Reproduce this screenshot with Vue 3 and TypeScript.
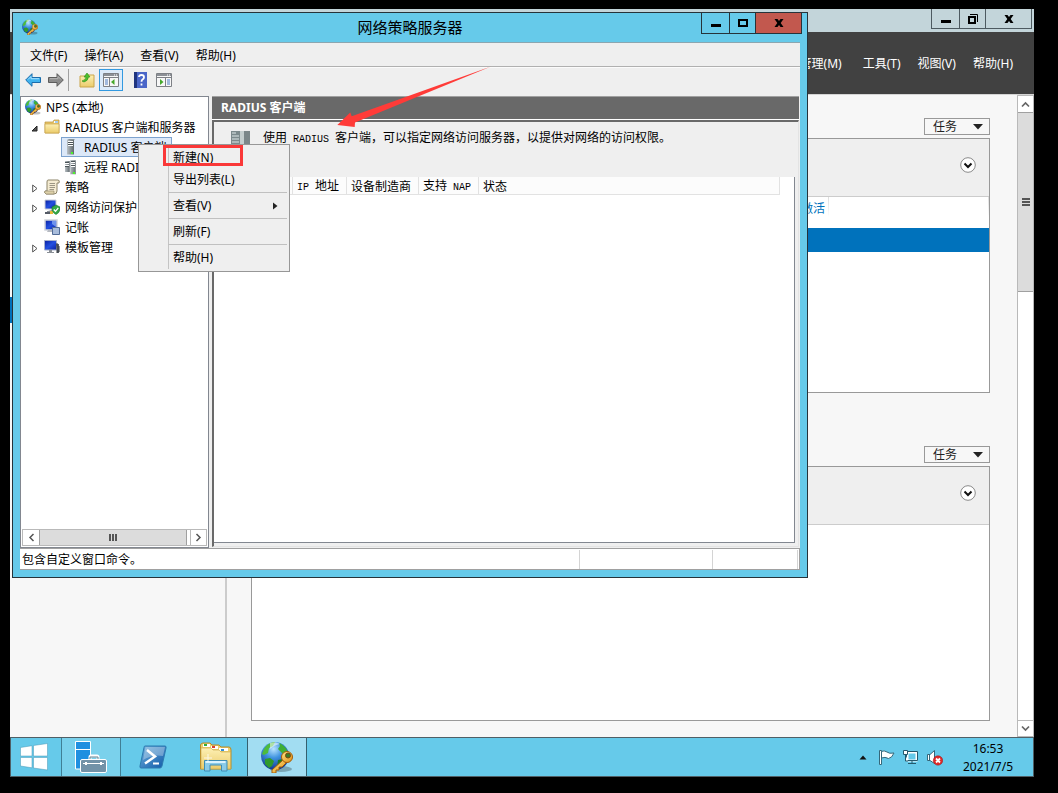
<script setup lang="ts">
import { ref } from 'vue'

interface TreeNode {
  label: string
  icon: string
  level: number
  state: 'open' | 'closed' | 'none'
}

const tree: TreeNode[] = [
  { label: 'NPS (本地)', icon: 'globe', level: 0, state: 'none' },
  { label: 'RADIUS 客户端和服务器', icon: 'folder', level: 1, state: 'open' },
  { label: 'RADIUS 客户端', icon: 'server', level: 2, state: 'none' },
  { label: '远程 RADIUS', icon: 'servers', level: 2, state: 'none' },
  { label: '策略', icon: 'scroll', level: 1, state: 'closed' },
  { label: '网络访问保护', icon: 'shield-pc', level: 1, state: 'closed' },
  { label: '记帐', icon: 'account-pc', level: 1, state: 'none' },
  { label: '模板管理', icon: 'template-pc', level: 1, state: 'closed' },
]

const selected = ref(2)
const appMenus = ['文件(F)', '操作(A)', '查看(V)', '帮助(H)']
const managerMenus = ['管理(M)', '工具(T)', '视图(V)', '帮助(H)']
const contextGroups = [['新建(N)', '导出列表(L)'], ['查看(V)'], ['刷新(F)'], ['帮助(H)']]
</script>

<template>
  <div class="screen">
    <svg class="symbols" aria-hidden="true">
      <defs>
        <radialGradient id="sea" cx="0.45" cy="0.25" r="0.8">
          <stop offset="0" stop-color="#b9e4ff" />
          <stop offset="0.4" stop-color="#3f93e0" />
          <stop offset="1" stop-color="#0b2a80" />
        </radialGradient>
        <linearGradient id="gold" x1="0" y1="0" x2="1" y2="1">
          <stop offset="0" stop-color="#ffe98a" />
          <stop offset="1" stop-color="#e08a10" />
        </linearGradient>
        <linearGradient id="paper" x1="0" y1="0" x2="0" y2="1">
          <stop offset="0" stop-color="#fdf0b4" />
          <stop offset="1" stop-color="#ebcb6a" />
        </linearGradient>
        <linearGradient id="steel" x1="0" y1="0" x2="1" y2="0">
          <stop offset="0" stop-color="#b9c0c4" />
          <stop offset="1" stop-color="#5d666b" />
        </linearGradient>
        <linearGradient id="screen-blue" x1="0" y1="0" x2="1" y2="1">
          <stop offset="0" stop-color="#0a1f9e" />
          <stop offset="0.5" stop-color="#2350e0" />
          <stop offset="1" stop-color="#0a1f9e" />
        </linearGradient>
        <linearGradient id="shell" x1="0" y1="0" x2="1" y2="1">
          <stop offset="0" stop-color="#6fb0dd" />
          <stop offset="1" stop-color="#0f58a8" />
        </linearGradient>
        <symbol id="globe" viewBox="0 0 32 32">
          <ellipse cx="20" cy="28" rx="11" ry="3" fill="#000" opacity="0.25" />
          <circle cx="14" cy="15" r="14" fill="url(#sea)" />
          <path d="M3 8C6 3 10 1 14 1L12 5L8 7L7 12L3 14L1 13Z" fill="#4dbb3c" />
          <path d="M18 2C23 4 26 8 27 12L23 14L20 11L17 8L19 5Z" fill="#3fae35" />
          <path d="M4 18L9 17L13 20L11 25L8 27L4 23Z" fill="#2f9a2c" />
          <path d="M17 19L22 18L20 25L16 27Z" fill="#1c7c25" />
          <path d="M9 2Q14 0 19 3Q13 4 9 8Z" fill="#fff" opacity="0.55" />
          <path d="M22 19L11 29L11 32H15V29H18V26H21L25 22Z" fill="url(#gold)" stroke="#a65c08" />
          <circle cx="26" cy="16" r="5.500" fill="url(#gold)" stroke="#a65c08" />
          <circle cx="27" cy="14.500" r="2.500" fill="#3d7a2a" stroke="#7a4a10" />
        </symbol>
        <symbol id="folder" viewBox="0 0 16 16">
          <path d="M1 3H9L10 1H15V14H1Z" fill="#eac66a" stroke="#b8933c" stroke-width="0.700" />
          <path d="M10 2H14V4H10Z" fill="#fff" />
          <path d="M11 2.500H14V3.500H11Z" fill="#4a9bd8" />
          <path d="M1 5H15V14H1Z" fill="url(#paper)" stroke="#c9a44a" stroke-width="0.700" />
        </symbol>
        <symbol id="server" viewBox="0 0 16 16">
          <path d="M3 1L5 0H11L10 1V15H3Z" fill="#8a9499" />
          <path d="M3 1H10V15.500H3Z" fill="url(#steel)" />
          <path d="M4 2.500H9M4 4.500H9M4 6.500H9" stroke="#fff" />
          <path d="M4 3.500H9M4 5.500H9" stroke="#4a5357" />
          <rect x="7" y="13" width="2" height="2" fill="#4cf52c" />
        </symbol>
        <symbol id="servers" viewBox="0 0 16 16">
          <path d="M1 2H6V13H1Z" fill="url(#steel)" />
          <path d="M6 1H12V15.500H6Z" fill="url(#steel)" stroke="#fff" stroke-width="0.500" />
          <path d="M1 4.500H5M1 6.500H5M7 3.500H11M7 5.500H11M7 7.500H11" stroke="#fff" />
          <path d="M1 3.500H5M1 7.500H5M7 2.500H11M7 6.500H11" stroke="#4a5357" />
          <rect x="9" y="13" width="2" height="2" fill="#4cf52c" />
        </symbol>
        <symbol id="scroll" viewBox="0 0 16 16">
          <path d="M4 1H14Q16 1 15 4H13V12Q13 15 10 15H2Q0 14 1 12H3V3Q3 1 4 1Z" fill="#f5ecd2" stroke="#8d8468" />
          <path d="M5.500 4.500H11M5.500 6.500H11M5.500 8.500H11M5.500 10.500H10" stroke="#9c9684" />
          <path d="M1 12H10V15H2Q0 14 1 12Z" fill="#ddd0a8" stroke="#8d8468" stroke-width="0.600" />
        </symbol>
        <symbol id="shield-pc" viewBox="0 0 16 16">
          <path d="M1 1H12V10H1Z" fill="url(#screen-blue)" stroke="#c9cdd6" />
          <path d="M4 11H9V12H3V14H8V12" fill="#8a8f96" />
          <path d="M1 13H7V15H1Z" fill="#555b66" />
          <rect x="6" y="12" width="3" height="3" fill="#e8b93a" />
          <path d="M8 8L12 6L16 8V11Q15 14 12 15.500Q9 14 8 11Z" fill="#35a947" stroke="#187a2c" stroke-width="0.600" />
          <path d="M9.800 10.500L11.500 12.300L14.300 8.800" fill="none" stroke="#fff" stroke-width="1.300" />
        </symbol>
        <symbol id="account-pc" viewBox="0 0 16 16">
          <path d="M1 1H13V11H1Z" fill="url(#screen-blue)" stroke="#cfd3dc" stroke-width="1.500" />
          <path d="M8 2H12V8L8 5Z" fill="#8fb1f5" opacity="0.7" />
          <path d="M4 11H8V13H3Z" fill="#b6bac2" />
          <path d="M8.500 8.500H15.500V15.500H8.500Z" fill="#a9bddc" stroke="#526c97" />
        </symbol>
        <symbol id="template-pc" viewBox="0 0 16 16">
          <path d="M0.500 1.500H12.500V11H0.500Z" fill="url(#screen-blue)" stroke="#a8b2cc" />
          <path d="M5 11H8V13H10V14H3V13H5Z" fill="#8a8f96" />
          <path d="M12 5H15V14H13V10Z" fill="#5a6068" />
          <path d="M13 4V14M15 7V13" stroke="#31363d" />
        </symbol>
      </defs>
    </svg>

    <div class="desktop">
      <section class="manager" aria-label="Server Manager">
        <div class="manager-title">
          <div class="controls">
            <button class="ctl" aria-label="最小化">
              <svg width="12" height="12" viewBox="0 0 12 12"><rect x="1" y="7" width="10" height="3" /></svg>
            </button>
            <button class="ctl mid" aria-label="还原">
              <svg width="12" height="12" viewBox="0 0 12 12">
                <path d="M3 1.500H10.500V9" fill="none" stroke="#000" />
                <rect x="2" y="4" width="6" height="6" fill="none" stroke="#000" stroke-width="2" />
              </svg>
            </button>
            <button class="ctl wide" aria-label="关闭">
              <svg width="12" height="12" viewBox="0 0 12 12">
                <path d="M1.500 2H4.500L6 4L7.500 2H10.500L7.700 6L10.500 10H7.500L6 8L4.500 10H1.500L4.300 6Z" />
              </svg>
            </button>
          </div>
        </div>
        <nav class="manager-menu">
          <button v-for="m in managerMenus" :key="m">{{ m }}</button>
        </nav>
        <div class="manager-body">
          <aside class="sidebar"><div class="side-selected"></div></aside>
          <main class="tiles">
            <section v-for="n in 2" :key="n" class="tile">
              <button class="task">
                <span>任务</span>
                <svg width="10" height="6" viewBox="0 0 10 6"><path d="M0 0H10L5 5.500Z" fill="#222" /></svg>
              </button>
              <div class="panel">
                <div class="panel-head">
                  <button class="round" aria-label="展开">
                    <svg width="16" height="16" viewBox="0 0 16 16">
                      <circle cx="8" cy="8" r="7.300" fill="#fff" stroke="#8a8a8a" />
                      <path d="M4.500 6.500L8 10L11.500 6.500" fill="none" stroke="#111" stroke-width="2" />
                    </svg>
                  </button>
                </div>
                <table v-if="n === 1" class="grid">
                  <thead>
                    <tr><th>激活</th><th class="rest"></th></tr>
                  </thead>
                  <tbody>
                    <tr><td></td><td></td></tr>
                  </tbody>
                </table>
              </div>
            </section>
          </main>
          <div class="vscroll">
            <button aria-label="向上">
              <svg width="9" height="7" viewBox="0 0 9 7"><path d="M1 5.500L4.500 2L8 5.500" fill="none" stroke="#666" stroke-width="1.700" /></svg>
            </button>
            <div class="vthumb"><i></i><i></i><i></i></div>
            <div class="vtrack"></div>
            <button aria-label="向下">
              <svg width="9" height="7" viewBox="0 0 9 7"><path d="M1 1.500L4.500 5L8 1.500" fill="none" stroke="#666" stroke-width="1.700" /></svg>
            </button>
          </div>
        </div>
      </section>

      <section class="nps" aria-label="网络策略服务器">
        <header class="nps-title">
          <svg class="app-icon" width="16" height="16"><use href="#globe" /></svg>
          <h1>网络策略服务器</h1>
          <div class="controls nps-controls">
            <button class="ctl" aria-label="最小化">
              <svg width="12" height="12" viewBox="0 0 12 12"><rect x="1" y="7" width="10" height="3" /></svg>
            </button>
            <button class="ctl mid" aria-label="最大化">
              <svg width="12" height="12" viewBox="0 0 12 12"><rect x="2" y="3" width="8" height="6" fill="none" stroke="#000" stroke-width="2" /></svg>
            </button>
            <button class="ctl wide close" aria-label="关闭">
              <svg width="12" height="12" viewBox="0 0 12 12">
                <path d="M1.500 2H4.500L6 4L7.500 2H10.500L7.700 6L10.500 10H7.500L6 8L4.500 10H1.500L4.300 6Z" />
              </svg>
            </button>
          </div>
        </header>

        <div class="client">
          <nav class="menubar">
            <button v-for="m in appMenus" :key="m">{{ m }}</button>
          </nav>

          <div class="toolbar">
            <button aria-label="后退">
              <svg width="16" height="16" viewBox="0 0 16 16">
                <path d="M0.700 8L7 1.700V5.500H15.500V10.500H7V14.300Z" fill="#3fb2ee" stroke="#1b6cab" />
                <path d="M3 7.500L6 4.500V6.700H14" fill="none" stroke="#a5e0ff" />
              </svg>
            </button>
            <button aria-label="前进">
              <svg width="16" height="16" viewBox="0 0 16 16">
                <path d="M15.300 8L9 1.700V5.500H0.500V10.500H9V14.300Z" fill="#8b8b8b" stroke="#5c5c5c" />
                <path d="M2 6.700H10V4.500L13 7.500" fill="none" stroke="#b5b5b5" />
              </svg>
            </button>
            <span class="bar-line"></span>
            <button class="up" aria-label="上移">
              <svg width="16" height="16" viewBox="0 0 16 16">
                <path d="M1 4H8L9 3H15V15H1Z" fill="url(#paper)" stroke="#c9a44a" />
                <path d="M3 9Q7 8 7 5L5 5L8 1L11 5H9.500Q9 9 5 10Z" fill="#4cc02c" stroke="#2a8a18" stroke-width="0.600" />
              </svg>
            </button>
            <button class="pressed" aria-label="显示/隐藏控制台树">
              <svg width="16" height="14" viewBox="0 0 16 14">
                <path d="M0.500 0.500H15.500V13.500H0.500Z" fill="#f7f7f7" stroke="#7d8085" />
                <path d="M1 2H15" stroke="#8c9096" stroke-width="2" />
                <path d="M11 2H12M13 2H14" stroke="#fff" />
                <path d="M0 4.500H16M6.500 5V13" stroke="#7d8085" />
                <path d="M2 7H5M2 9H5M2 11H5" stroke="#4c7cc4" />
                <path d="M11.500 6V12L8 9Z" fill="#45a82c" />
              </svg>
            </button>
            <button class="help" aria-label="帮助">
              <svg width="13" height="16" viewBox="0 0 13 16">
                <path d="M0 0H13V16H0Z" fill="#4a66c8" />
                <path d="M0 0H3V16H0Z" fill="#20357f" />
                <path d="M5 5Q5 3 7.500 3T10 5.200Q10 6.500 8.500 7.400Q7.500 8 7.500 9.800M7.500 11.500V13.500" fill="none" stroke="#fff" stroke-width="1.800" />
              </svg>
            </button>
            <button aria-label="显示/隐藏操作窗格">
              <svg width="16" height="14" viewBox="0 0 16 14">
                <path d="M0.500 0.500H15.500V13.500H0.500Z" fill="#f7f7f7" stroke="#7d8085" />
                <path d="M1 2H15" stroke="#8c9096" stroke-width="2" />
                <path d="M11 2H12M13 2H14" stroke="#fff" />
                <path d="M0 4.500H16M9.500 5V13" stroke="#7d8085" />
                <path d="M11 7H14M11 9H14M11 11H14" stroke="#4c7cc4" />
                <path d="M4 6V12L7.500 9Z" fill="#45a82c" />
              </svg>
            </button>
          </div>

          <div class="work">
            <div class="tree-pane">
              <ul class="tree">
                <li v-for="(node, i) in tree" :key="node.label" :class="'level-' + node.level">
                  <span class="twist">
                    <svg v-if="node.state === 'open'" width="7" height="7" viewBox="0 0 7 7"><path d="M6 1V6H1Z" fill="#555" stroke="#222" /></svg>
                    <svg v-if="node.state === 'closed'" width="6" height="9" viewBox="0 0 6 9"><path d="M0.700 1L5 4.500L0.700 8Z" fill="#fff" stroke="#555" /></svg>
                  </span>
                  <button class="node" :class="{ selected: i === selected }" @click="selected = i">
                    <svg width="16" height="16"><use :href="'#' + node.icon" /></svg>
                    <span>{{ node.label }}</span>
                  </button>
                </li>
              </ul>
              <div class="hscroll">
                <button aria-label="向左">
                  <svg width="7" height="9" viewBox="0 0 7 9"><path d="M5.500 1L2 4.500L5.500 8" fill="none" stroke="#555" stroke-width="1.500" /></svg>
                </button>
                <div class="hthumb"><i></i><i></i><i></i></div>
                <div class="htrack"></div>
                <button aria-label="向右">
                  <svg width="7" height="9" viewBox="0 0 7 9"><path d="M1.500 1L5 4.500L1.500 8" fill="none" stroke="#555" stroke-width="1.500" /></svg>
                </button>
              </div>
            </div>

            <div class="detail">
              <h2>RADIUS 客户端</h2>
              <div class="frame">
                <div class="intro">
                  <svg width="20" height="32" viewBox="0 0 20 32">
                    <path d="M0 1H9V30H0Z" fill="#7c8a8c" />
                    <path d="M1 3H5M1 6H8M1 9H8M1 12H8" stroke="#dfe8e8" />
                    <path d="M9 1H13V30H9Z" fill="#c4cece" />
                    <path d="M13 1H19V30H13Z" fill="#7b8789" />
                  </svg>
                  <p>使用<span class="latin"> RADIUS </span>客户端，可以指定网络访问服务器，以提供对网络的访问权限。</p>
                </div>
                <div class="list">
                  <table>
                    <colgroup>
                      <col class="c-name" /><col class="c-ip" /><col class="c-maker" /><col class="c-nap" /><col />
                    </colgroup>
                    <thead>
                      <tr>
                        <th></th>
                        <th><span class="latin">IP </span>地址</th>
                        <th>设备制造商</th>
                        <th>支持<span class="latin"> NAP</span></th>
                        <th>状态</th>
                      </tr>
                    </thead>
                  </table>
                </div>
              </div>
            </div>
          </div>

          <footer class="status">
            <span class="message">包含自定义窗口命令。</span>
            <span class="cell wide-cell"></span>
            <span class="cell"></span>
          </footer>
        </div>
      </section>

      <div class="context" role="menu">
        <div v-for="(group, g) in contextGroups" :key="g" class="group">
          <button v-for="item in group" :key="item" role="menuitem">
            <span>{{ item }}</span>
            <svg v-if="g === 1" width="5" height="8" viewBox="0 0 5 8"><path d="M0 0.500V7.500L4.500 4Z" fill="#222" /></svg>
          </button>
        </div>
      </div>
      <div class="highlight"></div>
      <svg class="arrow" width="165" height="70" viewBox="0 0 165 70" aria-hidden="true">
        <path d="M7.300 65L20.300 52.600L21.700 56.200L161 6.600L25 62.500L24.700 67Z" fill="#ff3b38" />
      </svg>

      <footer class="taskbar">
        <button class="app start" aria-label="开始">
          <svg width="28" height="28" viewBox="0 0 28 28" fill="#fff" stroke="#4696b4" stroke-width="0.500">
            <path d="M0.500 4.500L12 2.700V13H0.500ZM13.500 2.500L27.500 0.500V13H13.500ZM0.500 14.500H12V24.800L0.500 23ZM13.500 14.500H27.500V27L13.500 25Z" />
          </svg>
        </button>
        <button class="app server-app" aria-label="服务器管理器">
          <svg width="34" height="34" viewBox="0 0 34 34">
            <path d="M1.500 1.500H16.500V29H1.500Z" fill="#1f8fe0" stroke="#fff" />
            <path d="M2 9.500H16" stroke="#fff" />
            <path d="M16 20V17Q16 16 17 16H23Q24 16 24 17V20" fill="none" stroke="#fff" stroke-width="3" />
            <path d="M16 20V17H24V20" fill="none" stroke="#66818f" />
            <rect x="6.500" y="19.500" width="26" height="13" rx="1.500" fill="#7292a8" stroke="#fff" />
            <path d="M9 23.500H30" stroke="#fff" />
            <path d="M12 22V25M27 22V25" stroke="#fff" stroke-width="2" />
          </svg>
        </button>
        <button class="app" aria-label="PowerShell">
          <svg width="28" height="24" viewBox="0 0 28 24">
            <path d="M6 1H26Q27.500 1 27 3L23 21Q22.500 23 21 23H2Q0.500 23 1 21L5 2.500Q5 1 6 1Z" fill="url(#shell)" stroke="#2d7ab0" />
            <path d="M6.500 2H26L24 11Q14 9 4 15Z" fill="#fff" opacity="0.3" />
            <path d="M8 5L16 11.500L6 18.500" fill="none" stroke="#fff" stroke-width="2.500" />
            <path d="M14 18.500H20" stroke="#fff" stroke-width="2" />
          </svg>
        </button>
        <button class="app" aria-label="文件资源管理器">
          <svg width="34" height="32" viewBox="0 0 34 32">
            <path d="M1.500 28V4Q2 2 4 2H11L13 4H20L22 6H30Q32 6 32 9V28Z" fill="#ecd06e" stroke="#b48b2c" />
            <path d="M4 3H11V6H4ZM12 5H19V8H12ZM20 7H29V10H20Z" fill="#fff" />
            <path d="M5 3H8V5H5Z" fill="#2fae3c" /><path d="M13 5H16V7H13Z" fill="#d8402f" /><path d="M22 8H25V10H22Z" fill="#2f8ed8" />
            <path d="M2 7H12L14 9H20L22 11H31.500V28H2Z" fill="url(#paper)" stroke="#cba644" stroke-width="0.600" />
            <path d="M5.500 30V19.500H28V30H22.500V24H11V30Z" fill="#8acbe8" stroke="#3e8db5" />
            <path d="M6.500 21H26.500" stroke="#d9f3ff" stroke-width="2" />
            <path d="M9 13V21M5 17H13" stroke="#fff" opacity="0.8" />
          </svg>
        </button>
        <button class="app active" aria-label="网络策略服务器">
          <svg width="32" height="32"><use href="#globe" /></svg>
        </button>
        <div class="tray">
          <div class="tray-icons">
            <svg width="8" height="5" viewBox="0 0 8 5"><path d="M0.500 4.500L4 0.500L7.500 4.500Z" fill="#111" /></svg>
            <svg class="flag" width="17" height="17" viewBox="0 0 17 17">
              <path d="M1.500 1.500H3.500V15.500H1.500Z" fill="#fff" stroke="#35677a" />
              <path d="M3.500 2.500Q6 1 9 3Q11 5 16 4Q14 9 10.500 9.500Q7 7.500 3.500 9Z" fill="#fff" stroke="#35677a" />
            </svg>
            <svg width="17" height="17" viewBox="0 0 17 17">
              <path d="M5.500 3.500H14.500V11.500H5.500Z" fill="none" stroke="#fff" stroke-width="2" />
              <path d="M4.500 2.500H15.500V11.500H4.500ZM10 12V14M6 14.500H14" fill="none" stroke="#24586c" />
              <path d="M1.500 1.500H5.500V5.500H1.500ZM3.500 6V12H6" fill="#fff" stroke="#24586c" />
            </svg>
            <svg width="17" height="17" viewBox="0 0 17 17">
              <path d="M1.500 5.500H4L8.500 1.500V14.500L4 11.500H1.500Z" fill="#fff" stroke="#35677a" />
              <path d="M3.500 5.500V11" stroke="#35677a" />
              <circle cx="12" cy="11.500" r="4.700" fill="#e02a2a" stroke="#9e1414" stroke-width="0.500" />
              <path d="M10 9.500L14 13.500M14 9.500L10 13.500" stroke="#fff" stroke-width="1.800" />
            </svg>
          </div>
          <div class="clock"><time>16:53</time><time>2021/7/5</time></div>
        </div>
      </footer>
    </div>
  </div>
</template>

<style>
html,
body {
  margin: 0;
  background: #000;
}
</style>

<style scoped>
.screen {
  display: flex;
  min-height: 100vh;
  box-sizing: border-box;
  padding: 9px 24px 16px 10px;
  background: #000;
  color: #000;
  font: 12px/16px "Noto Sans", "Noto Sans CJK SC", sans-serif;
}
.screen * {
  box-sizing: border-box;
}
.symbols {
  position: absolute;
  width: 0;
  height: 0;
}
button {
  margin: 0;
  padding: 0;
  border: 0;
  background: none;
  color: inherit;
  font: inherit;
  white-space: nowrap;
}
svg {
  display: block;
  flex: none;
}
.desktop {
  position: relative;
  flex: 1;
  min-width: 0;
  display: flex;
  flex-direction: column;
}

/* Server manager */
.manager {
  flex: 1;
  display: flex;
  flex-direction: column;
  background: #f7f7f7;
}
.manager-title {
  display: flex;
  justify-content: flex-end;
  height: 23px;
  padding-right: 2px;
  background: #c3d5da;
}
.controls {
  display: flex;
  height: 20px;
  border: 1px solid #4d5a60;
  border-top: 0;
}
.ctl {
  display: grid;
  place-items: center;
  width: 27px;
}
.ctl.mid {
  width: 27px;
  border: solid #4d5a60;
  border-width: 0 1px;
}
.ctl.wide {
  width: 45px;
}
.manager-menu {
  display: flex;
  justify-content: flex-end;
  align-items: center;
  gap: 17px;
  height: 62px;
  padding: 2px 21px 0 0;
  background: #414141;
  color: #fff;
}
.manager-menu button:first-child {
  margin-right: 4px;
}
.manager-body {
  flex: 1;
  display: flex;
  border-top: 1px solid #d4d4d4;
}
.sidebar {
  width: 217px;
  padding-top: 202px;
  border-right: 2px solid #ccc;
}
.side-selected {
  height: 26px;
  background: #0072bc;
}
.tiles {
  flex: 1;
  display: flex;
  flex-direction: column;
  gap: 53px;
  padding: 23px 27px 16px 24px;
}
.tile {
  flex: 1;
  display: flex;
  flex-direction: column;
  gap: 3px;
}
.task {
  align-self: flex-end;
  display: flex;
  align-items: center;
  justify-content: space-between;
  width: 66px;
  height: 17px;
  padding: 0 6px 0 8px;
  border: 1px solid #999;
  color: #222;
}
.panel {
  flex: 1;
  border: 1px solid #999;
  background: #fff;
}
.panel-head {
  display: flex;
  justify-content: flex-end;
  height: 58px;
  padding: 18px 13px 0 0;
  border-bottom: 1px solid #ccc;
  background: #efefef;
}
.round {
  height: 16px;
}
.grid {
  width: 100%;
  border-collapse: collapse;
  table-layout: fixed;
}
.grid th {
  height: 31px;
  padding: 4px 4px 0 0;
  vertical-align: top;
  text-align: right;
  font-weight: normal;
  color: #0072bc;
  background: linear-gradient(#ddd, #fff) right top / 1px 20px no-repeat;
}
.grid .rest {
  width: 160px;
}
.grid td {
  height: 24px;
  padding: 0;
  background: #0072bc;
}
.vscroll {
  display: flex;
  flex-direction: column;
  width: 17px;
  border: 1px solid #b9b9b9;
  background: #fff;
}
.vscroll button {
  display: grid;
  place-items: center;
  height: 16px;
}
.vscroll button:last-child {
  border-top: 1px solid #b9b9b9;
}
.vthumb {
  display: flex;
  flex-direction: column;
  align-items: center;
  justify-content: center;
  gap: 1px;
  height: 180px;
  border: solid #a0a0a0;
  border-width: 1px 0;
  background: #dcdcdc;
}
.vthumb i {
  width: 8px;
  height: 2px;
  background: #555;
}
.vtrack {
  flex: 1;
}

/* NPS console */
.nps {
  position: absolute;
  left: 2px;
  top: 3px;
  width: calc(100% - 228px);
  height: calc(100% - 202px);
  display: flex;
  flex-direction: column;
  padding: 0 7px 7px;
  border: 1px solid #26333a;
  background: #66caea;
}
.nps-title {
  display: grid;
  grid-template-columns: 1fr auto 1fr;
  height: 29px;
}
.app-icon {
  margin: 6px 0 0 2px;
}
.nps-title h1 {
  margin: 3px 0 0;
  font-size: 15px;
  line-height: 22px;
  font-weight: normal;
}
.nps-controls {
  justify-self: end;
  height: 21px;
  margin-right: -2px;
  border-color: #26333a;
}
.nps-controls .mid {
  border-color: #26333a;
}
.close {
  background: #c2584e;
}
.client {
  flex: 1;
  min-height: 0;
  display: flex;
  flex-direction: column;
  border-top: 1px solid #8ba6b0;
  background: #efefef;
}
.menubar {
  display: flex;
  align-items: center;
  gap: 17px;
  height: 24px;
  padding: 2px 0 0 10px;
  border-bottom: 1px solid #b0b0b0;
}
.toolbar {
  display: flex;
  align-items: center;
  height: 29px;
  padding: 0 0 5px 5px;
  border-top: 1px solid #fbfbfb;
}
.toolbar button + button {
  margin-left: 7px;
}
.bar-line {
  width: 1px;
  height: 22px;
  margin: 0 10px 0 4px;
  background: #a0a0a0;
}
.toolbar .pressed {
  display: grid;
  place-items: center;
  width: 24px;
  height: 22px;
  margin-left: 4px;
  border: 1px solid #3399e0;
  background: #dcebfa;
}
.toolbar .help {
  margin-left: 11px;
}
.toolbar .help + button {
  margin-left: 9px;
}
.work {
  flex: 1;
  min-height: 0;
  display: flex;
  gap: 3px;
}
.tree-pane {
  display: flex;
  flex-direction: column;
  width: 189px;
  padding: 0 1px 1px;
  border: 1px solid #828790;
  background: #fff;
}
.tree {
  flex: 1;
  margin: 0;
  padding: 0;
  list-style: none;
  overflow: hidden;
}
.tree li {
  display: flex;
  align-items: center;
  height: 20px;
}
.twist {
  display: grid;
  place-items: center;
  width: 11px;
  padding-top: 2px;
}
.level-0 .twist {
  display: none;
}
.level-1 {
  padding-left: 7px;
}
.level-2 {
  padding-left: 28px;
}
.node {
  display: flex;
  align-items: center;
  gap: 5px;
  height: 20px;
  padding: 0 3px;
  border: 1px solid transparent;
}
.node span {
  padding-top: 2px;
}
.level-0 .node {
  padding-left: 2px;
}
.level-2 .node {
  gap: 4px;
  padding: 0 5px 0 2px;
}
.node.selected {
  border-color: #7da2ce;
  background: #dce8f8;
}
.hscroll {
  display: flex;
  height: 17px;
  border: 1px solid #b9b9b9;
}
.hscroll button {
  display: grid;
  place-items: center;
  width: 16px;
}
.hscroll button:last-child {
  border-left: 1px solid #b9b9b9;
}
.hthumb {
  flex: 1;
  display: flex;
  align-items: center;
  justify-content: center;
  gap: 1px;
  border: solid #a0a0a0;
  border-width: 0 1px;
  background: #dcdcdc;
}
.hthumb i {
  width: 2px;
  height: 7px;
  background: #555;
}
.htrack {
  width: 3px;
}
.detail {
  flex: 1;
  min-width: 0;
  display: flex;
  flex-direction: column;
  padding: 0 1px 1px 0;
}
.detail h2 {
  margin: 0;
  height: 24px;
  padding-left: 9px;
  border-top: 1px solid #a0a0a0;
  border-bottom: 1px solid #fff;
  background: #696969;
  color: #fff;
  font-size: 12px;
  line-height: 22px;
}
.frame {
  flex: 1;
  display: flex;
  flex-direction: column;
  padding: 0 3px 3px 0;
  border: solid #696969;
  border-width: 2px 1px 1px 2px;
  border-right-color: #e3e3e3;
  border-bottom-color: #e3e3e3;
  font-family: "Liberation Mono", "Noto Sans CJK SC", monospace;
}
.latin {
  font-size: 10px;
}
.intro {
  display: flex;
  gap: 12px;
  height: 55px;
  padding: 8px 0 0 17px;
}
.intro p {
  margin: 0;
  line-height: 18px;
  white-space: nowrap;
}
.list {
  flex: 1;
  padding-right: 14px;
  border: solid #828790;
  border-width: 0 1px 1px 0;
  background: #fff;
}
.list table {
  width: 100%;
  table-layout: fixed;
  border-collapse: separate;
  border-spacing: 0;
}
.c-name {
  width: 79px;
}
.c-ip {
  width: 54px;
}
.c-maker {
  width: 72px;
}
.c-nap {
  width: 60px;
}
.list th {
  height: 17px;
  padding: 4px 0 0 4px;
  border: solid #e2e2e2;
  border-width: 0 1px 1px 0;
  background: #fcfcfc;
  font-weight: normal;
  line-height: 12px;
  text-align: left;
  white-space: nowrap;
}
.status {
  display: flex;
  height: 22px;
  padding: 0 1px 0 2px;
  border: 1px solid #a0a0a0;
  border-left: 0;
  background: #fff;
}
.message {
  flex: 1;
  line-height: 22px;
}
.cell {
  width: 86px;
  margin-top: 1px;
  border: solid #d4d4d4;
  border-width: 0 1px;
}
.wide-cell {
  width: 133px;
  border-right: 0;
}

/* Context menu and marks */
.context {
  position: absolute;
  left: 128px;
  top: 135px;
  width: 152px;
  padding: 1px 2px 3px;
  border: 1px solid #979797;
  background: linear-gradient(#c4c4c4, #c4c4c4) 29px 0 / 1px calc(100% - 2px) no-repeat #efefef;
}
.group + .group {
  margin-top: 1px;
  padding-top: 2px;
  background: linear-gradient(#c0c0c0, #c0c0c0) right 1px / calc(100% - 27px) 1px no-repeat;
}
.group + .group::before {
  content: "";
  display: block;
  height: 1px;
}
.context button {
  display: flex;
  align-items: center;
  justify-content: space-between;
  width: 100%;
  height: 22px;
  padding: 2px 9px 0 32px;
}
.highlight {
  position: absolute;
  left: 153px;
  top: 136px;
  width: 80px;
  height: 21px;
  border: 3px solid #fa3838;
}
.arrow {
  position: absolute;
  left: 320px;
  top: 51px;
}

/* Taskbar */
.taskbar {
  display: flex;
  height: 40px;
  border: 1px solid #4f5f66;
  background: #66caea;
}
.app {
  display: grid;
  place-items: center;
  width: 62px;
}
.start {
  width: 51px;
  padding-right: 4px;
  border-right: 1px solid #3f7f96;
}
.server-app {
  width: 59px;
  border-right: 1px solid #3f7f96;
  background: #7ad1ec;
}
.app.active {
  width: 60px;
  border: solid #35606f;
  border-width: 0 1px;
  background: #a2ddf2;
}
.server-app + .app {
  width: 64px;
}
.tray {
  display: flex;
  align-items: center;
  margin-left: auto;
}
.tray-icons {
  display: flex;
  align-items: center;
  gap: 7px;
}
.flag {
  margin-left: 4px;
}
.clock {
  display: flex;
  flex-direction: column;
  width: 90px;
  padding-top: 2px;
  text-align: center;
  line-height: 18px;
}
</style>
